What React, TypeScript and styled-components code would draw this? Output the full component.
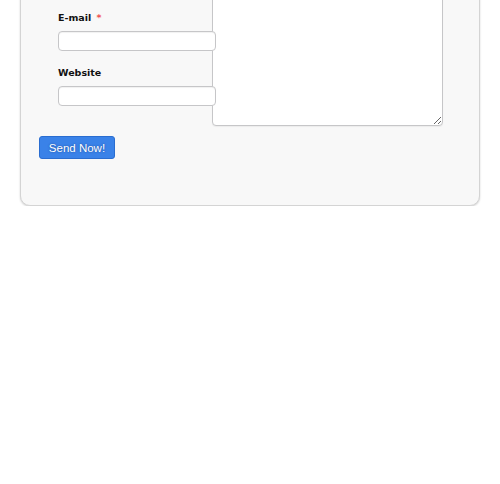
import styled, { createGlobalStyle } from 'styled-components';

const GlobalStyle = createGlobalStyle`
   html, body{
      margin: 0;
      padding: 0;
      background: #FFFFFF;
      overflow: hidden;
   }
`;

export default function App() {
   return (
      <>
         <GlobalStyle />
         <Card>
            <Fields>
               <FieldColumn>
                  <Field>
                     <Label>E-mail <Required>*</Required></Label>
                     <Input type='text' />
                  </Field>
                  <Field>
                     <Label>Website</Label>
                     <Input type='text' />
                  </Field>
               </FieldColumn>
               <Message />
            </Fields>
            <SendButton type='button'>Send Now!</SendButton>
         </Card>
      </>
   );
}

// the card is scrolled so that only its lower part shows
const Card = styled.form`

   margin: -63px 20px 0;
   padding: 18px 18px 46px;
   background: #F8F8F8;
   border: 1px solid #D4D4D4;
   border-radius: 10px;
   box-shadow: 0 1px 2px rgba(0, 0, 0, 0.18);
   font-family: 'DejaVu Sans', Verdana, sans-serif;

`;

const Fields = styled.div`

   display: flex;
   align-items: flex-start;
   margin-bottom: 10px;

`;

const FieldColumn = styled.div`

   display: flex;
   flex-direction: column;
   width: 158px;
   padding-top: 55px;
   margin-left: 19px;
   margin-right: -4px;
   z-index: 1;

`;

const Field = styled.div`

   display: flex;
   flex-direction: column;
   margin-bottom: 15px;

`;

const Label = styled.label`

   display: block;
   font-size: 9.5px;
   line-height: 13px;
   font-weight: bold;
   color: #111111;
   margin-bottom: 7px;

`;

const Required = styled.span`

   color: #F05050;
   margin-left: 2px;

`;

const Input = styled.input`

   box-sizing: border-box;
   width: 158px;
   height: 20px;
   margin: 0;
   padding: 2px 5px;
   background: #FFFFFF;
   border: 1px solid #C6C6C8;
   border-radius: 4px;
   box-shadow: inset 0 1px 1px rgba(0, 0, 0, 0.06);
   font: 11px 'DejaVu Sans', sans-serif;
   outline: none;

`;

const Message = styled.textarea`

   box-sizing: border-box;
   width: 231px;
   height: 170px;
   margin: 0;
   padding: 4px;
   background: #FFFFFF;
   border: 1px solid #C6C6C8;
   border-radius: 4px;
   box-shadow: 0 1px 1px rgba(0, 0, 0, 0.05);
   font: 11px 'DejaVu Sans', sans-serif;
   outline: none;

`;

const SendButton = styled.button`

   display: block;
   box-sizing: border-box;
   width: 76px;
   height: 23px;
   margin: 0;
   padding: 0;
   background: #3A82E8;
   border: 1px solid #2A6DD0;
   border-radius: 3px;
   color: #FFFFFF;
   font: 11.5px 'Liberation Sans', Arial, sans-serif;
   text-shadow: 0 0 2px rgba(0, 30, 90, 0.55);
   cursor: pointer;

`;
